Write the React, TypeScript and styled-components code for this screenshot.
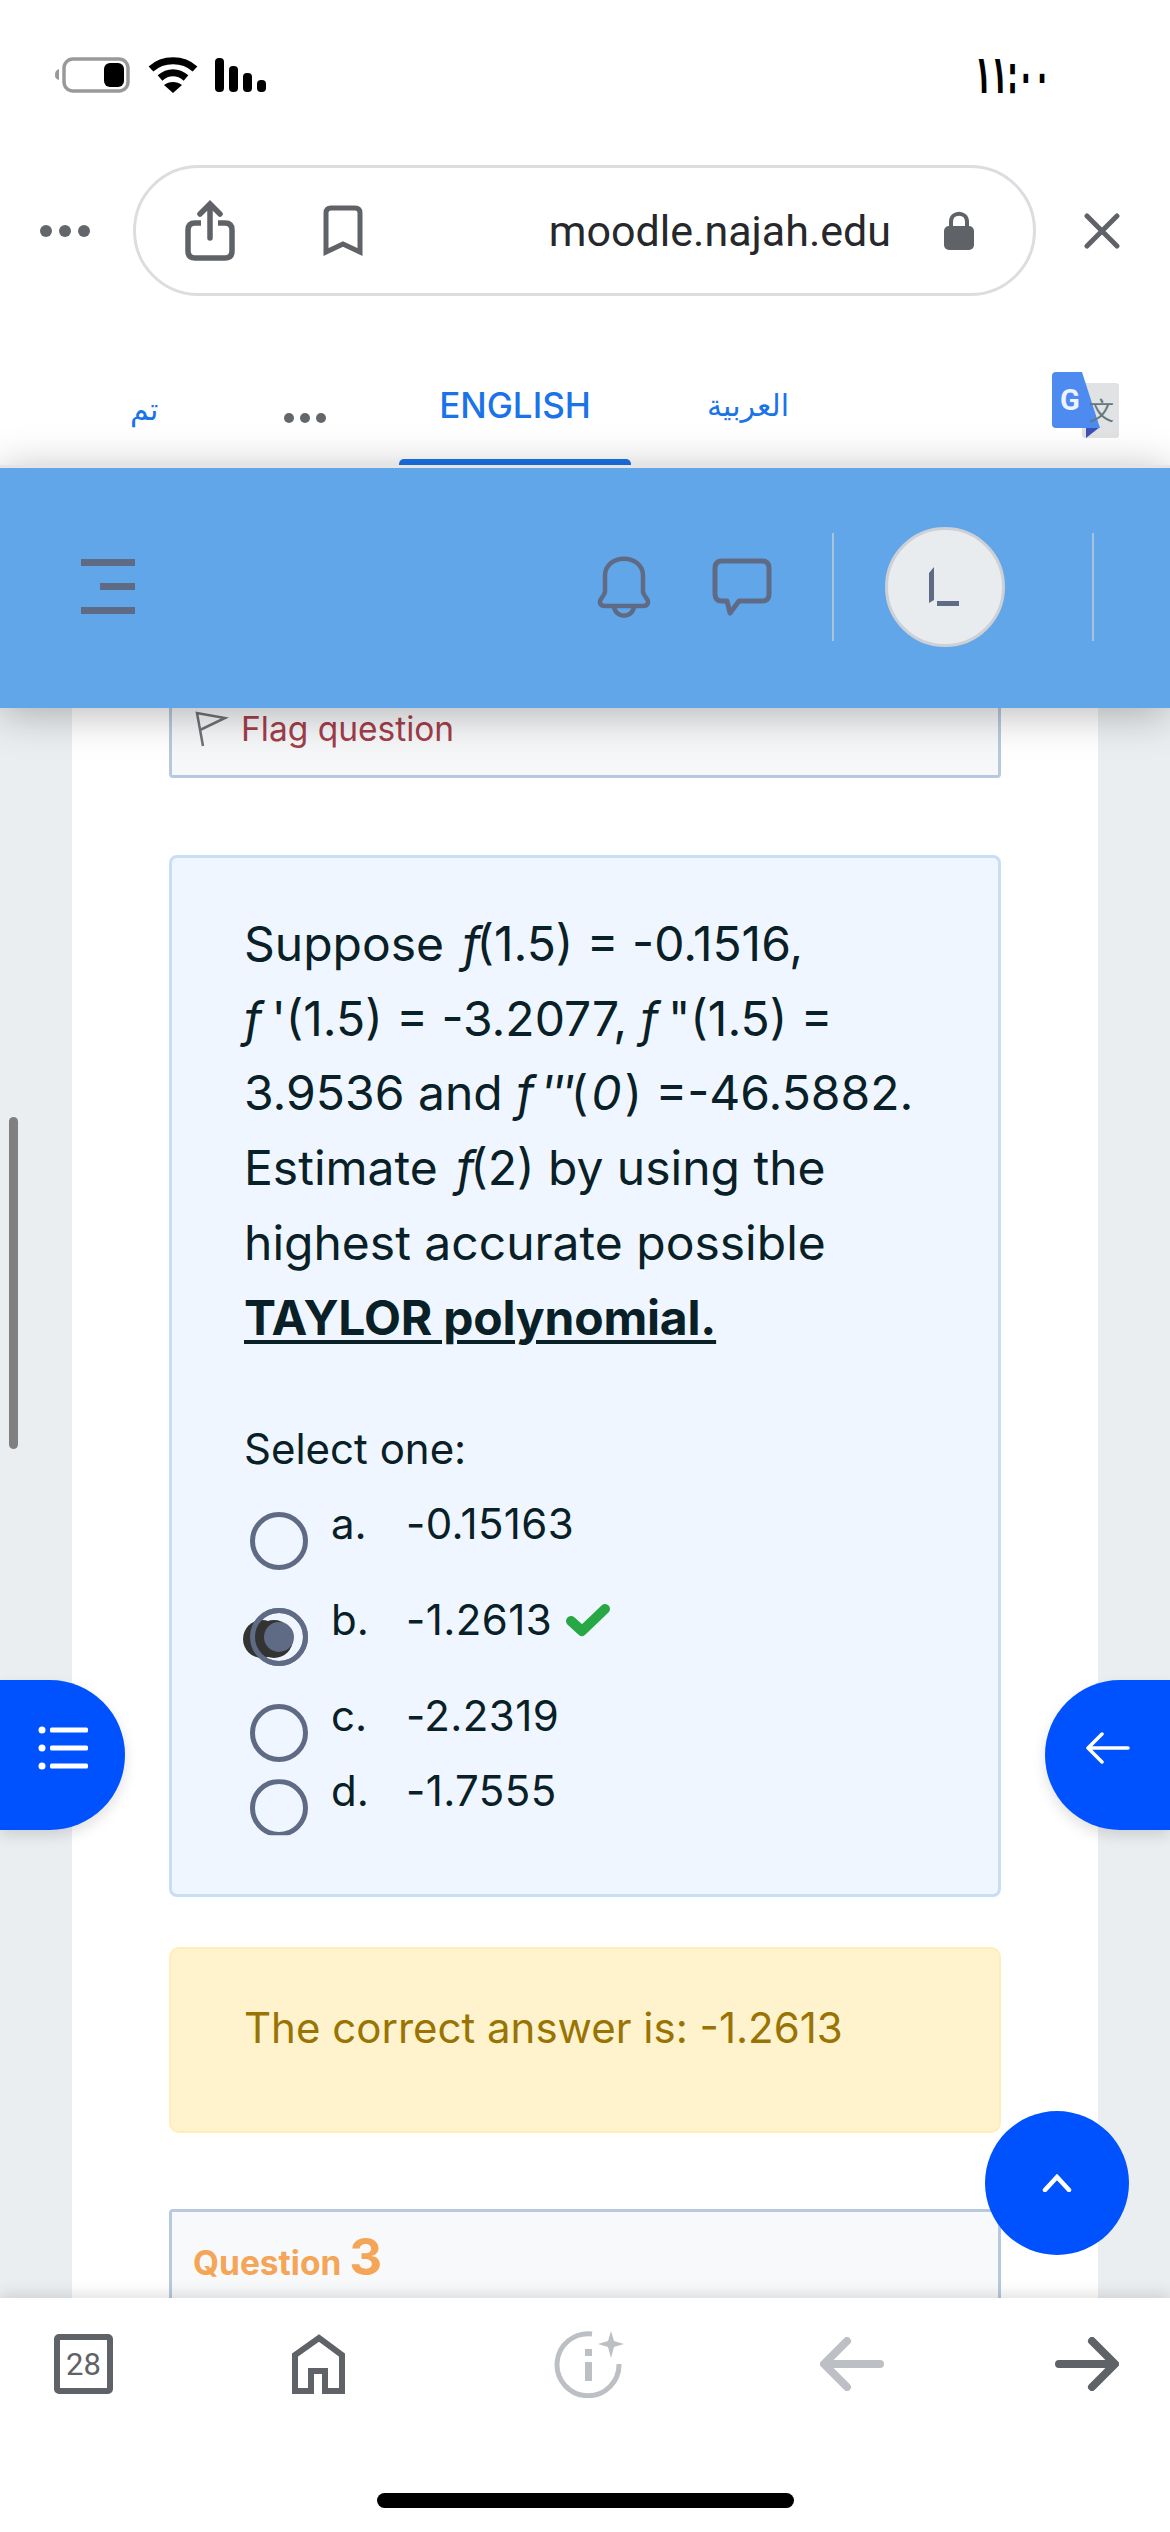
import styled, { createGlobalStyle } from 'styled-components'

const GlobalStyle = createGlobalStyle`
  html, body {
    margin: 0;
    padding: 0;
    background: #fff;
  }
  * {
    box-sizing: border-box;
  }
`

const chromeGray = '#5f6368'
const mutedGray = '#bcc0c4'
const slate = '#5f6b85'

const options = [
  { letter: 'a.', value: '-0.15163', height: 96 },
  { letter: 'b.', value: '-1.2613', height: 96, selected: true },
  { letter: 'c.', value: '-2.2319', height: 75 },
  { letter: 'd.', value: '-1.7555', height: 56, clipped: true },
]

const App = () => (
  <Screen>
    <GlobalStyle />
    <StatusBar>
      <StatusIcons>
        <svg width="76" height="38" viewBox="0 0 76 38">
          <rect x="9" y="3" width="64" height="32" rx="9" fill="none" stroke="#999" strokeWidth="3.5" />
          <rect x="49" y="7" width="20" height="24" rx="6" fill="#000" />
          <path d="M4 13C1 14 0 16 0 19C0 22 1 23 4 24Z" fill="#999" />
        </svg>
        <svg width="50" height="38" viewBox="0 0 50 38">
          <path d="M3 13C15 2 35 2 47 13" fill="none" stroke="#000" strokeWidth="7" />
          <path d="M12 22C20 15 30 15 38 22" fill="none" stroke="#000" strokeWidth="7" />
          <path d="M25 37L16 29C21 25 29 25 34 29Z" fill="#000" />
        </svg>
        <SignalBars>
          <SignalBar $height={34} />
          <SignalBar $height={26} />
          <SignalBar $height={19} />
          <SignalBar $height={12} />
        </SignalBars>
      </StatusIcons>
      <Clock>١١:٠٠</Clock>
    </StatusBar>

    <AddressRow>
      <Dots />
      <UrlBar>
        <UrlActions>
          <svg width="52" height="62" viewBox="0 0 52 62">
            <path d="M17 23H11Q4 23 4 30V51Q4 58 11 58H41Q48 58 48 51V30Q48 23 41 23H34" fill="none" stroke={chromeGray} strokeWidth="5.5" />
            <path d="M26 38V5M16 14L26 4L36 14" fill="none" stroke={chromeGray} strokeWidth="5.5" strokeLinecap="round" />
          </svg>
          <svg width="40" height="52" viewBox="0 0 40 52">
            <path d="M3 47V8Q3 3 8 3H32Q37 3 37 8V47L20 39Z" fill="none" stroke={chromeGray} strokeWidth="5" />
          </svg>
        </UrlActions>
        <UrlText>moodle.najah.edu</UrlText>
        <svg width="30" height="40" viewBox="0 0 30 40">
          <path d="M7 18V11C7 0 23 0 23 11V18" fill="none" stroke={chromeGray} strokeWidth="4" />
          <rect x="0" y="15" width="30" height="24" rx="5" fill={chromeGray} />
        </svg>
      </UrlBar>
      <svg width="36" height="36" viewBox="0 0 36 36">
        <path d="M3 3L33 33M33 3L3 33" stroke={chromeGray} strokeWidth="5" strokeLinecap="round" />
      </svg>
    </AddressRow>

    <TranslateBar>
      <TranslateLink $width={27} $lift={16} $after={110}>
        تم
      </TranslateLink>
      <Dots $small />
      <EnglishTab>ENGLISH</EnglishTab>
      <TranslateLink $width={80} $lift={23} $after={0}>
        العربية
      </TranslateLink>
      <TranslateBadge>
        <svg width="68" height="66" viewBox="0 0 68 66">
          <rect x="30" y="11" width="37" height="55" rx="3" fill="#e0e2e4" />
          <path d="M34 55H48L34 66Z" fill="#3f51b5" />
          <path d="M4 0H30L48 56H4Q0 56 0 52V4Q0 0 4 0Z" fill="#4d8bf0" />
        </svg>
        <BadgeG>G</BadgeG>
        <BadgeHan>文</BadgeHan>
      </TranslateBadge>
    </TranslateBar>

    <SiteHeader>
      <Hamburger>
        <HamburgerBar $width={54} />
        <HamburgerBar $width={35} />
        <HamburgerBar $width={54} />
      </Hamburger>
      <HeaderActions>
        <svg width="56" height="62" viewBox="0 0 56 62">
          <path d="M9 36V20C9 -3 47 -3 47 20V36C48 41 53 43 52 47Q51 50 47 50H9Q5 50 4 47C3 43 8 41 9 36Z" fill="none" stroke={slate} strokeWidth="4.5" />
          <path d="M18 50C19 63 37 63 38 50" fill="none" stroke={slate} strokeWidth="4.5" />
        </svg>
        <svg width="60" height="58" viewBox="0 0 60 58">
          <path d="M10 3H50Q57 3 57 10V36Q57 43 50 43H27L18 55L15 43H10Q3 43 3 36V10Q3 3 10 3Z" fill="none" stroke={slate} strokeWidth="5" strokeLinejoin="round" />
        </svg>
        <HeaderDivider />
        <Avatar>
          <svg width="32" height="40" viewBox="0 0 32 40">
            <path d="M0 6L5 0V33L0 36Z" fill={slate} />
            <rect x="8" y="34" width="22" height="5" fill={slate} />
          </svg>
        </Avatar>
        <HeaderDivider />
      </HeaderActions>
    </SiteHeader>

    <Main>
      <PageSheet>
        <FlagBox>
          <svg width="34" height="36" viewBox="0 0 34 36">
            <path d="M8 35L2 2L30 7L5 19" fill="none" stroke="#6f7276" strokeWidth="2.5" />
          </svg>
          <FlagText>Flag question</FlagText>
        </FlagBox>

        <QuestionBox>
          <QuestionText>
            Suppose <InlineFn>f</InlineFn>(1.5) = -0.1516,
            <br />
            <Fn>f</Fn> '(1.5) = -3.2077, <Fn>f</Fn> "(1.5) =
            <br />
            3.9536 and <Fn>f '''</Fn>(<ZeroArg>0</ZeroArg>) =-46.5882.
            <br />
            Estimate <InlineFn>f</InlineFn>(2) by using the
            <br />
            highest accurate possible
            <br />
            <Underlined>TAYLOR polynomial.</Underlined>
          </QuestionText>
          <SelectLabel>Select one:</SelectLabel>
          <OptionList>
            {options.map((option) => (
              <OptionRow key={option.letter} $height={option.height}>
                <Radio $selected={option.selected} $clipped={option.clipped} />
                <OptionLetter>{option.letter}</OptionLetter>
                <OptionValue>{option.value}</OptionValue>
                {option.selected && (
                  <CheckMark width="44" height="34" viewBox="0 0 44 34">
                    <path d="M5 18L16 28L39 6" fill="none" stroke="#28a745" strokeWidth="10" strokeLinejoin="round" strokeLinecap="round" />
                  </CheckMark>
                )}
              </OptionRow>
            ))}
          </OptionList>
        </QuestionBox>

        <AnswerBox>The correct answer is: -1.2613</AnswerBox>

        <NextQuestion>
          Question <NextNumber>3</NextNumber>
        </NextQuestion>
      </PageSheet>

      <ScrollThumb />
      <DrawerButton $side="left">
        <svg width="50" height="44" viewBox="0 0 50 44">
          <g fill="#fff">
            <circle cx="4" cy="4" r="3.5" />
            <circle cx="4" cy="22" r="3.5" />
            <circle cx="4" cy="40" r="3.5" />
            <rect x="12" y="1.5" width="38" height="5" rx="1.5" />
            <rect x="12" y="19.5" width="38" height="5" rx="1.5" />
            <rect x="12" y="37.5" width="38" height="5" rx="1.5" />
          </g>
        </svg>
      </DrawerButton>
      <DrawerButton $side="right">
        <svg width="44" height="32" viewBox="0 0 44 32">
          <path d="M42 16H3M16 2L2 16L16 30" fill="none" stroke="#fff" strokeWidth="3.5" strokeLinecap="round" strokeLinejoin="round" />
        </svg>
      </DrawerButton>
      <ScrollTopButton>
        <svg width="30" height="18" viewBox="0 0 30 18">
          <path d="M3 16L15 3L27 16" fill="none" stroke="#fff" strokeWidth="4.5" strokeLinecap="round" />
        </svg>
      </ScrollTopButton>
    </Main>

    <BottomBar>
      <BottomIcons>
        <TabCount>28</TabCount>
        <svg width="54" height="60" viewBox="0 0 54 60">
          <path d="M3 57H19V37H33V57H50V21L27 4L3 21Z" fill="none" stroke={chromeGray} strokeWidth="6" />
        </svg>
        <svg width="70" height="68" viewBox="0 0 70 68">
          <path d="M38 4A31 31 0 1 0 65 34" fill="none" stroke={mutedGray} strokeWidth="5" />
          <rect x="31" y="32" width="7" height="19" fill={mutedGray} />
          <rect x="31" y="19" width="7" height="7" fill={mutedGray} />
          <path d="M57 1L60 11L70 14L60 17L57 28L54 17L44 14L54 11Z" fill={mutedGray} />
        </svg>
        <svg width="64" height="54" viewBox="0 0 64 54">
          <path d="M60 27H5M27 4L4 27L27 50" fill="none" stroke={mutedGray} strokeWidth="8" strokeLinecap="round" strokeLinejoin="round" />
        </svg>
        <svg width="64" height="54" viewBox="0 0 64 54">
          <path d="M4 27H59M37 4L60 27L37 50" fill="none" stroke={chromeGray} strokeWidth="8" strokeLinecap="round" strokeLinejoin="round" />
        </svg>
      </BottomIcons>
      <HomeIndicator />
    </BottomBar>
  </Screen>
)

export default App

const Screen = styled.div`
  position: relative;
  display: flex;
  flex-direction: column;
  width: 1170px;
  height: 2532px;
  overflow: hidden;
  background: #fff;
  font-family: Inter, 'Noto Sans', sans-serif;
`

const StatusBar = styled.div`
  display: flex;
  align-items: center;
  justify-content: space-between;
  height: 165px;
  padding: 0 120px 16px 55px;
  flex-shrink: 0;
`

const StatusIcons = styled.div`
  display: flex;
  align-items: center;
  gap: 17px;
`

const SignalBars = styled.div`
  display: flex;
  align-items: flex-end;
  gap: 5px;
  height: 34px;
`

const SignalBar = styled.span<{ $height: number }>`
  width: 9px;
  height: ${({ $height }) => $height}px;
  border-radius: 4px;
  background: #000;
`

// the glyphs are far wider and shorter than the reference's clock face
const Clock = styled.span`
  font-family: 'DejaVu Sans', sans-serif;
  font-size: 44px;
  font-weight: 700;
  line-height: 1;
  letter-spacing: -10px;
  transform: scale(0.6, 1.22);
  transform-origin: right center;
`

const AddressRow = styled.div`
  display: flex;
  align-items: center;
  height: 131px;
  padding: 0 50px 0 40px;
  flex-shrink: 0;
`

const Dots = styled.span<{ $small?: boolean }>`
  display: block;
  width: ${({ $small }) => ($small ? 10 : 12)}px;
  height: ${({ $small }) => ($small ? 10 : 12)}px;
  margin-right: ${({ $small }) => ($small ? 98 : 85)}px;
  margin-left: ${({ $small }) => ($small ? 17 : 0)}px;
  border-radius: 50%;
  background: #63666a;
  box-shadow: ${({ $small }) => ($small ? '16px 0 #63666a, 32px 0 #63666a' : '19px 0 #63666a, 38px 0 #63666a')};
`

const UrlBar = styled.div`
  display: flex;
  align-items: center;
  width: 904px;
  height: 131px;
  margin-right: 48px;
  margin-left: -4px;
  padding: 0 59px 0 48px;
  border: 3px solid #dcdde1;
  border-radius: 66px;
`

const UrlActions = styled.div`
  display: flex;
  align-items: center;
  gap: 87px;
`

const UrlText = styled.span`
  margin-left: auto;
  margin-right: 53px;
  font-family: Roboto, sans-serif;
  font-size: 43px;
  color: #26282c;
`

const TranslateBar = styled.div`
  display: flex;
  align-items: center;
  height: 95px;
  margin-top: 74px;
  padding: 0 50px 0 130px;
  flex-shrink: 0;
`

const TranslateLink = styled.span<{ $width: number; $lift: number; $after: number }>`
  width: ${({ $width }) => $width}px;
  margin-top: -${({ $lift }) => $lift}px;
  margin-right: ${({ $after }) => $after}px;
  font-family: 'DejaVu Sans', sans-serif;
  font-size: 30px;
  line-height: 1;
  color: #1a73e8;
  white-space: nowrap;
`

const EnglishTab = styled.span`
  position: relative;
  display: flex;
  align-items: center;
  justify-content: center;
  align-self: stretch;
  width: 232px;
  height: 95px;
  margin-right: 76px;
  margin-left: 7px;
  padding-bottom: 25px;
  font-size: 35px;
  font-weight: 500;
  color: #1a73e8;
  &::after {
    content: '';
    position: absolute;
    right: 0;
    bottom: 0;
    left: 0;
    height: 6px;
    border-radius: 5px 5px 0 0;
    background: #1a73e8;
  }
`

const TranslateBadge = styled.div`
  position: relative;
  width: 68px;
  height: 66px;
  margin-left: auto;
  margin-top: -26px;
`

const BadgeG = styled.span`
  position: absolute;
  top: 11px;
  left: 8px;
  font-family: Roboto, sans-serif;
  font-size: 29px;
  font-weight: 700;
  color: #eef3fd;
`

const BadgeHan = styled.span`
  position: absolute;
  top: 22px;
  left: 37px;
  font-family: 'Noto Sans CJK SC', sans-serif;
  font-size: 25px;
  line-height: 1.2;
  color: #64787c;
`

const SiteHeader = styled.header`
  position: relative;
  z-index: 2;
  display: flex;
  align-items: center;
  justify-content: space-between;
  height: 243px;
  padding: 0 76px 0 81px;
  border-top: 3px solid #e5e5e5;
  background: #62a6ea;
  box-shadow: 0 6px 40px rgba(0, 0, 0, 0.28);
  flex-shrink: 0;
`

const Hamburger = styled.div`
  display: flex;
  flex-direction: column;
  align-items: flex-end;
  gap: 17px;
  margin-top: -4px;
`

const HamburgerBar = styled.span<{ $width: number }>`
  display: block;
  width: ${({ $width }) => $width}px;
  height: 7px;
  background: ${slate};
`

const HeaderActions = styled.div`
  display: flex;
  align-items: center;
  gap: 60px;
  margin-top: -2px;
`

const HeaderDivider = styled.span`
  display: block;
  width: 2px;
  height: 108px;
  background: #a9c3dd;
`

const Avatar = styled.div`
  display: flex;
  align-items: center;
  justify-content: center;
  width: 120px;
  height: 120px;
  margin: 0 27px 0 -9px;
  border: 3px solid #cdd0d4;
  border-radius: 50%;
  background: #e9ecef;
`

const Main = styled.main`
  position: relative;
  flex: 1;
  min-height: 0;
  overflow: hidden;
  padding: 0 72px;
  background: #ebeef0;
`

const PageSheet = styled.div`
  height: 100%;
  padding: 0 97px;
  background: #fff;
`

const FlagBox = styled.div`
  display: flex;
  align-items: flex-start;
  height: 70px;
  padding: 3px 0 0 23px;
  border: 3px solid #b8c8df;
  border-top: 0;
  border-radius: 0 0 4px 4px;
  background: #f6f7f9;
`

const FlagText = styled.span`
  margin-top: -2px;
  margin-left: 12px;
  font-size: 33.5px;
  line-height: 40px;
  color: #a33e4b;
`

const QuestionBox = styled.section`
  height: 1042px;
  margin-top: 77px;
  padding: 49px 72px 0;
  border: 3px solid #c5dff7;
  border-radius: 8px;
  background: #eff6ff;
  color: #082026;
`

const QuestionText = styled.div`
  font-size: 48px;
  line-height: 74.7px;
`

const Fn = styled.em`
  letter-spacing: -4px;
`

const InlineFn = styled(Fn)`
  margin-left: 5px;
`

const ZeroArg = styled.em`
  padding: 0 3px;
`

const Underlined = styled.strong`
  font-weight: 700;
  letter-spacing: -0.2px;
  text-decoration: underline;
  text-decoration-thickness: 4px;
  text-underline-offset: 5px;
`

const SelectLabel = styled.div`
  margin-top: 57px;
  font-size: 42px;
  line-height: 74px;
`

const OptionList = styled.div`
  margin-top: 26px;
`

const OptionRow = styled.div<{ $height: number }>`
  display: flex;
  align-items: flex-start;
  height: ${({ $height }) => $height}px;
  padding-left: 6px;
`

const Radio = styled.span<{ $selected?: boolean; $clipped?: boolean }>`
  position: relative;
  display: block;
  flex-shrink: 0;
  width: 58px;
  height: 58px;
  border: 5px solid ${slate};
  border-radius: 50%;
  clip-path: ${({ $clipped }) => ($clipped ? 'inset(0 0 2px 0)' : 'none')};
  &::before {
    content: '';
    display: ${({ $selected }) => ($selected ? 'block' : 'none')};
    position: absolute;
    z-index: 1;
    inset: -5px;
    border: 5px solid ${slate};
    border-radius: 50%;
  }
  &::after {
    content: '';
    display: ${({ $selected }) => ($selected ? 'block' : 'none')};
    position: absolute;
    top: 9px;
    left: 9px;
    width: 30px;
    height: 30px;
    border-radius: 50%;
    background: ${slate};
    box-shadow: -5px 2px 0 4px #333, -17px 2px 0 4px #333;
  }
`

const OptionLetter = styled.span`
  width: 75px;
  margin-top: -13px;
  margin-left: 23px;
  font-size: 42px;
  line-height: 50px;
`

const OptionValue = styled(OptionLetter)`
  width: auto;
  margin-left: 0;
  margin-right: 14px;
  letter-spacing: 0.4px;
`

const CheckMark = styled.svg`
  margin-top: -5px;
`

const AnswerBox = styled.div`
  height: 186px;
  margin-top: 50px;
  padding: 54px 73px 0;
  border: 2px solid #ffeeba;
  border-radius: 10px;
  background: #fff3cd;
  font-size: 42px;
  line-height: 50px;
  color: #997404;
`

const NextQuestion = styled.div`
  height: 120px;
  margin-top: 76px;
  padding: 14px 21px 0;
  border: 3px solid #b8c8df;
  border-bottom: 0;
  border-radius: 4px 4px 0 0;
  background: #f8f9fa;
  font-size: 33.5px;
  font-weight: 700;
  color: #f4a557;
`

const NextNumber = styled.span`
  font-size: 51px;
`

const ScrollThumb = styled.span`
  position: absolute;
  top: 409px;
  left: 9px;
  width: 9px;
  height: 332px;
  border-radius: 5px;
  background: #808080;
`

const DrawerButton = styled.button<{ $side: 'left' | 'right' }>`
  position: absolute;
  top: 972px;
  ${({ $side }) => $side}: 0;
  display: flex;
  align-items: center;
  justify-content: center;
  width: 125px;
  height: 150px;
  padding: 0 0 14px;
  border: 0;
  border-radius: ${({ $side }) => ($side === 'left' ? '0 75px 75px 0' : '75px 0 0 75px')};
  background: #0052ff;
  box-shadow: 0 6px 14px rgba(0, 0, 0, 0.12);
`

const ScrollTopButton = styled.button`
  position: absolute;
  top: 1403px;
  left: 985px;
  display: flex;
  align-items: center;
  justify-content: center;
  width: 144px;
  height: 144px;
  padding: 0;
  border: 0;
  border-radius: 50%;
  background: #0052ff;
`

const BottomBar = styled.footer`
  position: relative;
  z-index: 2;
  display: flex;
  flex-direction: column;
  height: 234px;
  background: #fff;
  box-shadow: 0 -4px 14px rgba(0, 0, 0, 0.12);
  flex-shrink: 0;
`

const BottomIcons = styled.div`
  display: grid;
  grid-template-columns: 238px 262px 266px 235px auto;
  align-items: center;
  height: 106px;
  margin-top: 13px;
  padding-left: 54px;
`

const TabCount = styled.span`
  display: flex;
  align-items: center;
  justify-content: center;
  width: 59px;
  height: 60px;
  border: 6px solid ${chromeGray};
  border-radius: 5px;
  font-family: Roboto, sans-serif;
  font-size: 31px;
  color: ${chromeGray};
`

const HomeIndicator = styled.span`
  display: block;
  width: 417px;
  height: 15px;
  margin: 76px auto 0;
  border-radius: 8px;
  background: #000;
`
